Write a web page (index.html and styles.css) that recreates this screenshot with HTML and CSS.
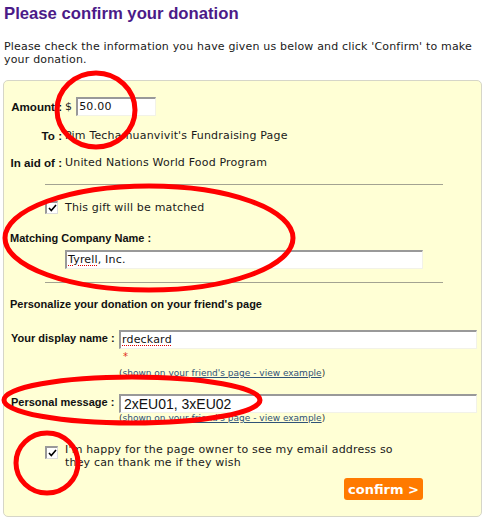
FILE: index.html
```html
<!DOCTYPE html>
<html>
<head>
<meta charset="utf-8">
<link rel="stylesheet" href="styles.css">
</head>
<body>
<div class="page">
  <h1 class="title">Please confirm your donation</h1>
  <p class="intro">Please check the information you have given us below and click 'Confirm' to make your donation.</p>
  <div class="box">
    <div class="grid-a">
      <div class="lbl">Amount :</div>
      <div class="val"><span class="dollar">$</span><span class="input amount">50.00</span></div>
      <div class="lbl">To :</div>
      <div class="val txt">Pim Techamuanvivit's Fundraising Page</div>
      <div class="lbl">In aid of :</div>
      <div class="val txt">United Nations World Food Program</div>
    </div>
    <div class="rule rule-1"></div>
    <div class="check-row match">
      <span class="cbox"><svg width="9" height="8" viewBox="0 0 9 8"><path d="M1 4 L3.3 6.5 L8 1" fill="none" stroke="#000" stroke-width="1.6"/></svg></span>
      <span class="txt">This gift will be matched</span>
    </div>
    <div class="lbl-left company">Matching Company Name :</div>
    <div class="input company-input"><span class="spell">Tyrell</span>, Inc.</div>
    <div class="rule rule-2"></div>
    <div class="lbl-left personalize">Personalize your donation on your friend's page</div>
    <div class="grid-b">
      <div class="lbl-b">Your display name :</div>
      <div class="field">
        <div class="input wide"><span class="spell">rdeckard</span></div>
        <div class="req">*</div>
        <div class="note note-1">(<a href="#">shown on your friend's page - view example</a>)</div>
      </div>
      <div class="lbl-b">Personal message :</div>
      <div class="field">
        <div class="input wide msg">2xEU01, 3xEU02</div>
        <div class="note note-2">(<a href="#">shown on your friend's page - view example</a>)</div>
      </div>
    </div>
    <div class="check-row email">
      <span class="cbox"><svg width="9" height="8" viewBox="0 0 9 8"><path d="M1 4 L3.3 6.5 L8 1" fill="none" stroke="#000" stroke-width="1.6"/></svg></span>
      <span class="txt">I'm happy for the page owner to see my email address so they can thank me if they wish</span>
    </div>
    <div class="actions"><button class="confirm">confirm &gt;</button></div>
  </div>
</div>
<svg class="marks" width="487" height="519" viewBox="0 0 487 519">
  <g fill="none" stroke="#ff0000" stroke-width="5">
    <ellipse cx="96" cy="110" rx="39" ry="37"/>
    <ellipse cx="149" cy="238" rx="144" ry="52"/>
    <ellipse cx="132" cy="400" rx="128" ry="23"/>
    <ellipse cx="47" cy="463" rx="31" ry="30"/>
  </g>
</svg>
</body>
</html>
```
FILE: styles.css
```css
html, body {
  margin: 0;
  padding: 0;
  background: #ffffff;
}
body {
  position: relative;
  width: 487px;
  height: 519px;
  overflow: hidden;
  font-family: "DejaVu Sans", Verdana, sans-serif;
  font-size: 11px;
  letter-spacing: 0.18px;
  color: #1a1a1a;
}
.page {
  padding: 0 3px 0 3px;
}
.title {
  margin: 0;
  padding: 4px 0 0 1px;
  font-family: "Liberation Sans", Arial, sans-serif;
  font-weight: bold;
  font-size: 16.7px;
  letter-spacing: 0;
  line-height: 20px;
  color: #4b1a88;
}
.intro {
  margin: 16px 0 0 1px;
  line-height: 13px;
  width: 478px;
}
.box {
  margin-top: 14px;
  width: 479px;
  height: 437px;
  box-sizing: border-box;
  background: #ffffd5;
  border: 1px solid #d6d6c8;
  border-radius: 5px;
  padding: 16px 0 0 6px;
}
.grid-a {
  display: grid;
  grid-template-columns: 52px auto;
  column-gap: 3px;
  row-gap: 13px;
  align-items: center;
}
.lbl, .lbl-left, .lbl-b {
  font-family: "Liberation Sans", Arial, sans-serif;
  font-weight: bold;
  font-size: 11px;
  letter-spacing: 0;
  line-height: 14px;
  color: #111;
  white-space: nowrap;
}
.lbl {
  text-align: right;
  font-size: 11.6px;
}
.val {
  display: flex;
  align-items: center;
  line-height: 14px;
}
.dollar {
  margin-right: 4px;
}
.input {
  box-sizing: border-box;
  background: #fff;
  border-top: 2px solid #999;
  border-left: 2px solid #999;
  border-right: 1px solid #f2f2e8;
  border-bottom: 1px solid #f2f2e8;
  height: 19px;
  line-height: 16px;
  padding-left: 1px;
  font-family: "DejaVu Sans", Verdana, sans-serif;
  font-size: 11px;
  color: #111;
}
.amount {
  display: inline-block;
  width: 80px;
}
.spell {
  text-decoration: underline dotted #e00000;
  text-underline-offset: 2px;
}
.rule {
  margin-left: 35px;
  width: 398px;
  height: 1px;
  background: #a3a392;
}
.rule-1 {
  margin-top: 14px;
}
.rule-2 {
  margin-top: 13px;
}
.check-row {
  display: flex;
  align-items: flex-start;
  margin-left: 35px;
}
.cbox {
  flex: none;
  box-sizing: border-box;
  width: 13px;
  height: 13px;
  background: #fff;
  border-top: 2px solid #999;
  border-left: 2px solid #999;
  border-right: 1px solid #ddd;
  border-bottom: 1px solid #ddd;
  display: flex;
  align-items: center;
  justify-content: center;
  margin-right: 7px;
}
.check-row .txt {
  line-height: 13px;
}
.match {
  margin-top: 16px;
}
.company {
  margin-top: 17px;
}
.company-input {
  margin: 5px 0 0 55px;
  width: 358px;
}
.personalize {
  margin-top: 14px;
}
.grid-b {
  margin-top: 19px;
  display: grid;
  grid-template-columns: 109px 358px;
  row-gap: 15px;
}
.lbl-b {
  padding-top: 1px;
  padding-left: 1px;
}
.wide {
  width: 358px;
}
.msg {
  font-family: "Liberation Sans", Arial, sans-serif;
  font-size: 14px;
  letter-spacing: 0;
  line-height: 17px;
  padding-left: 3px;
}
.req {
  color: #e03020;
  font-size: 10px;
  line-height: 10px;
  margin: 3px 0 0 4px;
}
.note {
  font-size: 9px;
  letter-spacing: 0;
  color: #333;
}
.note-1 {
  line-height: 11px;
  margin-top: 6px;
}
.note-2 {
  line-height: 10px;
  margin-top: 0;
}
.note a {
  color: #2f5277;
  text-decoration: underline;
}
.email {
  margin-top: 20px;
  width: 360px;
}
.email .cbox {
  margin-top: 3px;
}
.actions {
  display: flex;
  justify-content: flex-end;
  width: 413px;
  margin-top: 9px;
}
.confirm {
  border: none;
  background: #ff7a00;
  color: #fff;
  font-family: "DejaVu Sans", Verdana, sans-serif;
  font-weight: bold;
  font-size: 13px;
  letter-spacing: 0;
  height: 22px;
  width: 79px;
  border-radius: 3px;
  padding: 0;
}
.marks {
  position: absolute;
  left: 0;
  top: 0;
  pointer-events: none;
}
```
